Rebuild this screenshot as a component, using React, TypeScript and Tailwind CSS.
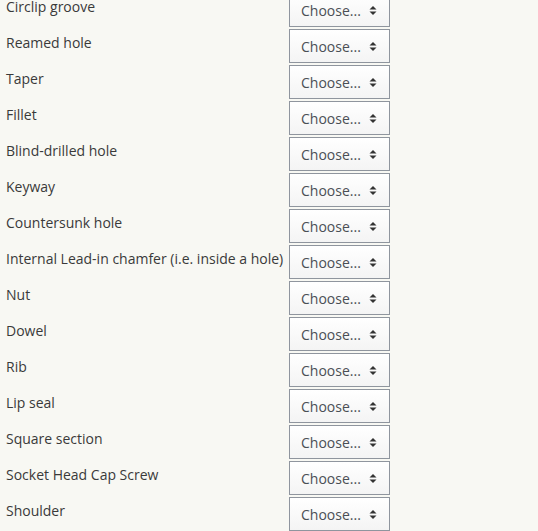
const items = [
  'Circlip groove',
  'Reamed hole',
  'Taper',
  'Fillet',
  'Blind-drilled hole',
  'Keyway',
  'Countersunk hole',
  'Internal Lead-in chamfer (i.e. inside a hole)',
  'Nut',
  'Dowel',
  'Rib',
  'Lip seal',
  'Square section',
  'Socket Head Cap Screw',
  'Shoulder',
];

function SortIcon() {
  return (
    <svg width="8" height="11" viewBox="0 0 8 11" className="shrink-0">
      <path d="M0.5 4.5 L4 1 L7.5 4.5 Z" fill="#333" />
      <path d="M0.5 6.5 L4 10 L7.5 6.5 Z" fill="#333" />
    </svg>
  );
}

export default function App() {
  return (
    <div
      className="h-[531px] w-[538px] overflow-hidden bg-[#f8f8f3]"
      style={{ fontFamily: '"Open Sans", "Liberation Sans", sans-serif' }}
    >
      <div className="-mt-[7px] pl-[6px]">
        {items.map((item) => (
          <div key={item} className="flex h-[36px] items-start">
            <div className="w-[283px] pt-[3px] text-[14px] leading-[21px] text-[#3a3a3a]">
              {item}
            </div>
            <div className="flex h-[34px] w-[101px] items-center justify-between border border-[#8f959e] bg-gradient-to-b from-white to-[#f4f4f4] pl-[11px] pr-[12px] text-[14px] text-[#4a4f55]">
              <span>Choose...</span>
              <SortIcon />
            </div>
          </div>
        ))}
      </div>
    </div>
  );
}
